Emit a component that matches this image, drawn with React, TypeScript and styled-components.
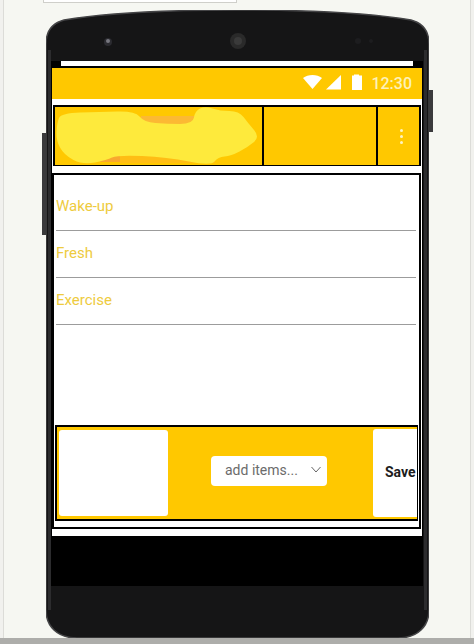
import React from 'react';
import styled, { createGlobalStyle } from 'styled-components';

const GlobalStyle = createGlobalStyle`
  html, body {
    margin: 0;
    padding: 0;
    background: #f1f1ee;
  }
`;

const Panel = styled.div`
  width: 466px;
  height: 638px;
  margin: 0 3px;
  background: #f6f7f2;
  border-left: 1px solid #dcdcd8;
  border-right: 1px solid #dcdcd8;
  overflow: hidden;
`;

const Footer = styled.div`
  height: 6px;
  background: #adadaa;
`;

const UrlTab = styled.div`
  width: 192px;
  height: 2px;
  margin-left: 39px;
  background: #fff;
  border: 1px solid #cfcfca;
  border-top: none;
`;

const Phone = styled.div`
  position: relative;
  width: 383px;
  height: 628px;
  margin: 7px 0 0 42px;
  padding: 51px 0 0 5px;
  box-sizing: border-box;
`;

const Hull = styled.svg`
  position: absolute;
  left: 0;
  top: 0;
`;

const SideButton = styled.div<{ $side: 'left' | 'right'; $top: number; $h: number }>`
  position: absolute;
  top: ${p => p.$top}px;
  height: ${p => p.$h}px;
  width: 4px;
  background: #3a3a3c;
  ${p => (p.$side === 'left' ? 'left: -4px;' : 'right: -4px;')}
`;

const Screen = styled.div`
  position: relative;
  width: 372px;
  height: 525px;
  padding: 0 1px;
  box-sizing: border-box;
  background: #000;
  font-family: Roboto, 'Liberation Sans', sans-serif;
  display: flex;
  flex-direction: column;
`;

const TopStrip = styled.div`
  height: 5px;
  margin: 0 9px 2px;
  background: #fff;
`;

const StatusBar = styled.div`
  height: 31px;
  background: #ffc800;
  display: flex;
  align-items: center;
  justify-content: flex-end;
  padding: 0 10px 0 0;
  color: #fdf1b8;
  font-size: 16px;
  font-weight: 500;
`;

const StatusIcons = styled.svg`
  margin: 0 9px 3px 0;
`;

const Content = styled.div`
  background: #fff;
  padding: 6px 1px 7px 1px;
  display: flex;
  flex-direction: column;
  gap: 7px;
`;

const TopBar = styled.div`
  height: 61px;
  box-sizing: border-box;
  background: #000;
  padding: 2px 2px 1px;
  display: grid;
  grid-template-columns: 207px 112px 1fr;
  gap: 2px;
`;

const Cell = styled.div`
  position: relative;
  background: #ffc800;
  display: flex;
  align-items: center;
  justify-content: center;
  overflow: hidden;
`;

const Dots = styled.div`
  display: flex;
  flex-direction: column;
  gap: 3px;
  margin-left: 6px;
`;

const Dot = styled.span`
  width: 3px;
  height: 3px;
  border-radius: 50%;
  background: #fdf3c4;
`;

const Body = styled.div`
  height: 356px;
  box-sizing: border-box;
  margin-left: -1px;
  border: 2px solid #000;
  background: #fff;
  display: flex;
  flex-direction: column;
`;

const List = styled.div`
  flex: 1;
  padding: 9px 3px 0 2px;
`;

const Row = styled.div`
  height: 47px;
  box-sizing: border-box;
  display: flex;
  align-items: center;
  border-bottom: 1px solid #9c9c9c;
  padding-bottom: 3px;
  color: #eecb3e;
  font-size: 15px;
`;

const BottomBar = styled.div`
  height: 96px;
  margin: 0 1px 6px;
  box-sizing: border-box;
  border: 2px solid #000;
  border-right-width: 1px;
  background: #ffc800;
  display: flex;
  align-items: center;
  overflow: hidden;
`;

const NameBox = styled.div`
  width: 109px;
  height: 86px;
  margin-left: 2px;
  flex-shrink: 0;
  background: #fff;
  border-radius: 3px;
`;

const SelectBox = styled.div`
  width: 116px;
  height: 30px;
  margin: 0 0 4px 43px;
  flex-shrink: 0;
  box-sizing: border-box;
  padding: 0 5px 2px 14px;
  background: #fff;
  border-radius: 4px;
  display: flex;
  align-items: center;
  justify-content: space-between;
  color: #6b6b6b;
  font-size: 14px;
`;

const SaveButton = styled.div`
  width: 70px;
  height: 88px;
  margin-left: 46px;
  flex-shrink: 0;
  box-sizing: border-box;
  padding: 0 0 2px 12px;
  background: #fff;
  border-radius: 3px;
  display: flex;
  align-items: center;
  color: #1c1c1c;
  font-size: 14px;
  font-weight: 700;
`;

const NavArea = styled.div`
  flex: 1;
  background: #000;
`;

// outline of the scribble over the app title, rounded through edge midpoints
const SCRIBBLE: [number, number][] = [
  [2, 16], [6, 6], [45, 5], [80, 4], [89, 15], [112, 17], [138, 17], [140, 4], [150, -1],
  [165, 4], [184, 4], [193, 16], [205, 30], [193, 40], [176, 49], [163, 50], [156, 59],
  [112, 50], [62, 48], [52, 53], [28, 58], [9, 48], [1, 33],
];

const smoothPath = (pts: [number, number][]) => {
  const mid = (a: [number, number], b: [number, number]) => `${(a[0] + b[0]) / 2} ${(a[1] + b[1]) / 2}`;
  let d = `M${mid(pts[pts.length - 1], pts[0])}`;
  pts.forEach((p, i) => {
    d += ` Q${p[0]} ${p[1]} ${mid(p, pts[(i + 1) % pts.length])}`;
  });
  return d + ' Z';
};

const App: React.FC = () => (
  <>
    <GlobalStyle />
    <Panel>
      <UrlTab />
      <Phone>
        <SideButton $side="left" $top={123} $h={102} />
        <SideButton $side="right" $top={80} $h={42} />
        <Hull width="383" height="628" viewBox="0 0 383 628">
          <path
            d="M0 34 C0 20 7 13 18 10 C60 3 120 0 191 0 C262 0 323 3 365 10 C376 13 383 20 383 34 L383 600 C383 616 372 628 352 628 L31 628 C11 628 0 616 0 600 Z"
            fill="#151516"
            stroke="#444446"
            strokeWidth="1.5"
          />
          <rect x="2" y="40" width="3" height="560" fill="#2c2c2e" />
          <rect x="378" y="40" width="3" height="560" fill="#2c2c2e" />
          <circle cx="62" cy="32" r="4" fill="#2b2b30" />
          <circle cx="62" cy="31" r="2" fill="#77777f" />
          <circle cx="192" cy="31" r="8" fill="#2a2a2a" />
          <circle cx="192" cy="31" r="4" fill="#3a3a3a" />
          <circle cx="312" cy="31" r="3" fill="#1d1d1f" />
          <circle cx="325" cy="31" r="2" fill="#1d1d1f" />
        </Hull>
        <Screen>
          <TopStrip />
          <StatusBar>
            <StatusIcons width="60" height="16" viewBox="0 0 60 16">
              <path d="M1 4 C6 0 15 0 20 4 L10.5 15 Z" fill="#fff" />
              <path d="M24 15.5 L39 1 L39 15.5 Z" fill="#fff" />
              <path d="M50 1.5 H52 V0.5 H57 V1.5 H60 V16 H50 Z" fill="#fff" />
            </StatusIcons>
            12:30
          </StatusBar>
          <Content>
            <TopBar>
              <Cell>
                <svg width="207" height="58" viewBox="0 0 207 58">
                  <rect x="86" y="9" width="54" height="9" fill="#fcb933" />
                  <rect x="45" y="46" width="22" height="9" fill="#f9a82e" />
                  <rect x="65" y="46" width="95" height="10" fill="#ffbd14" />
                  <path d={smoothPath(SCRIBBLE)} fill="#feea3c" />
                </svg>
              </Cell>
              <Cell />
              <Cell>
                <Dots>
                  <Dot />
                  <Dot />
                  <Dot />
                </Dots>
              </Cell>
            </TopBar>
            <Body>
              <List>
                <Row>Wake-up</Row>
                <Row>Fresh</Row>
                <Row>Exercise</Row>
              </List>
              <BottomBar>
                <NameBox />
                <SelectBox>
                  add items...
                  <svg width="12" height="8" viewBox="0 0 12 8">
                    <path d="M1.5 1 L6 6 L10.5 1" fill="none" stroke="#666" strokeWidth="1" />
                  </svg>
                </SelectBox>
                <SaveButton>Save</SaveButton>
              </BottomBar>
            </Body>
          </Content>
          <NavArea />
        </Screen>
      </Phone>
    </Panel>
    <Footer />
  </>
);

export default App;
